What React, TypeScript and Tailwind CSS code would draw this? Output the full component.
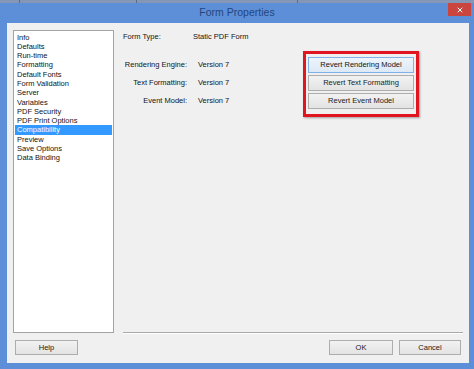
import { X } from 'lucide-react';

const items = [
  'Info',
  'Defaults',
  'Run-time',
  'Formatting',
  'Default Fonts',
  'Form Validation',
  'Server',
  'Variables',
  'PDF Security',
  'PDF Print Options',
  'Compatibility',
  'Preview',
  'Save Options',
  'Data Binding',
];

const rows = [
  { label: 'Rendering Engine:', value: 'Version 7' },
  { label: 'Text Formatting:', value: 'Version 7' },
  { label: 'Event Model:', value: 'Version 7' },
];

const revertButtons = ['Revert Rendering Model', 'Revert Text Formatting', 'Revert Event Model'];

const btn =
  'flex items-center justify-center border border-[#adadad] bg-gradient-to-b from-[#f2f2f2] to-[#e3e3e3] text-[#1a1a1a]';

const App = () => {
  return (
    <div
      className="flex h-[369px] w-[474px] flex-col overflow-hidden bg-[#5d8fd8] text-[7.5px] text-[#141414]"
      style={{ fontFamily: '"Liberation Sans", Arial, sans-serif' }}
    >
      {/* strip of the window behind */}
      <div className="flex h-[3px] bg-[#8597b6]">
        <div className="w-[20px] border-r border-[#5c6c88]" />
        <div className="w-[117px] border-r border-[#5c6c88]" />
        <div className="w-[161px] border-r border-[#5c6c88]" />
      </div>

      {/* title bar */}
      <div className="relative flex h-[20px] items-center justify-center">
        <span className="text-[10.5px] text-[#23467c]">Form Properties</span>
        <div className="absolute right-[3px] top-0 flex h-[13px] w-[23px] items-center justify-center bg-[#c9453e]">
          <X size={8} strokeWidth={3} className="text-white" />
        </div>
      </div>

      <div className="flex flex-1 px-[5px] pb-[6px] pl-[7px]">
        <div className="flex flex-1 flex-col bg-[#f0f0f0] px-[6px] pb-[8px] pt-[7px]">
          <div className="flex flex-1 gap-[9px]">
            {/* category list */}
            <div className="w-[101px] border border-[#a3a3a3] bg-white px-px pt-[1.5px]">
              {items.map((item) => (
                <div
                  key={item}
                  className={
                    item === 'Compatibility'
                      ? 'bg-[#3399ff] px-[2px] leading-[9.3px] text-white'
                      : 'px-[2px] leading-[9.3px]'
                  }
                >
                  {item}
                </div>
              ))}
            </div>

            {/* properties panel */}
            <div className="flex flex-1 flex-col">
              <div className="flex pt-[2px] leading-[10px]">
                <span className="w-[70px]">Form Type:</span>
                <span>Static PDF Form</span>
              </div>

              <div className="mt-[9px] flex">
                <div className="flex w-[64px] flex-col items-end pt-[5px]">
                  {rows.map((r) => (
                    <div key={r.label} className="flex h-[18px] items-center">
                      {r.label}
                    </div>
                  ))}
                </div>
                <div className="ml-[11px] flex w-[105px] flex-col pt-[5px]">
                  {rows.map((r) => (
                    <div key={r.label} className="flex h-[18px] items-center">
                      {r.value}
                    </div>
                  ))}
                </div>
                <div className="flex w-[116px] flex-col gap-[2px] border-[3px] border-[#e0151f] px-[2px] pb-[5px] pt-[3px] shadow-[1px_1px_2px_rgba(0,0,0,0.35)]">
                  {revertButtons.map((b, i) => (
                    <div
                      key={b}
                      className={
                        i === 0
                          ? 'flex h-[16px] items-center justify-center border border-[#7fb2e6] bg-gradient-to-b from-[#edf4fc] to-[#dde9f6]'
                          : `${btn} h-[16px]`
                      }
                    >
                      {b}
                    </div>
                  ))}
                </div>
              </div>

              <div className="mt-auto border-b border-[#a8a8a8] shadow-[0_1px_0_#ffffff]" />
            </div>
          </div>

          {/* bottom buttons */}
          <div className="mt-[7px] flex h-[15px] gap-[6px] px-[2px]">
            <div className={`${btn} w-[63px]`}>Help</div>
            <div className={`${btn} ml-auto w-[64px]`}>OK</div>
            <div className={`${btn} w-[62px]`}>Cancel</div>
          </div>
        </div>
      </div>
    </div>
  );
};

export default App;
